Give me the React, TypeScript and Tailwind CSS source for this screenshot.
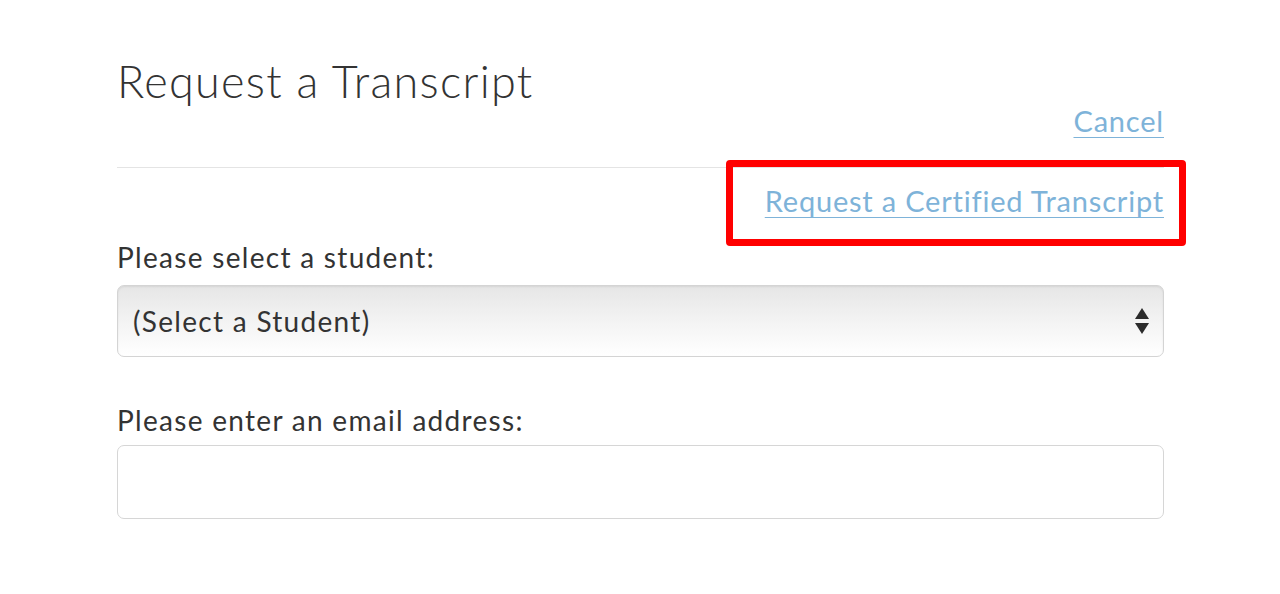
import React from "react";

const font = { fontFamily: '"Lato", "Open Sans", sans-serif' };

export default function App() {
  return (
    <div className="min-h-[594px] w-full bg-white" style={font}>
      <div className="w-[1047px] ml-[117px] pt-[55px]">
        <div className="flex items-start justify-between">
          <h1 className="text-[45px] font-light leading-[52px] tracking-[1.3px] text-[#333]">
            Request a Transcript
          </h1>
        </div>
        <div className="flex justify-end -mt-[4px]">
          <a
            href="#"
            className="text-[29px] leading-[36px] tracking-[0.8px] text-[#7eb3d9] underline underline-offset-[5px] decoration-1"
          >
            Cancel
          </a>
        </div>
        <hr className="mt-[28px] border-t border-[#e4e4e4]" />
        <div className="flex justify-end mt-[13px]">
          <div className="relative">
            <a
              href="#"
              className="text-[29px] leading-[40px] tracking-[0.8px] text-[#7eb3d9] underline underline-offset-[5px] decoration-1"
            >
              Request a Certified Transcript
            </a>
            {/* annotation box */}
            <div className="pointer-events-none absolute -left-[39px] -right-[22px] -top-[21px] -bottom-[25px] rounded-[4px] border-[7px] border-[#ff0000]" />
          </div>
        </div>
        <label className="mt-[18px] block text-[28px] leading-[36px] tracking-[1.3px] text-[#333]">
          Please select a student:
        </label>
        <div className="relative mt-[10px]">
          <select
            className="h-[72px] w-full appearance-none rounded-[7px] border border-[#d4d4d4] bg-gradient-to-b from-[#e6e6e6] via-[#f3f3f3] to-[#ffffff] pl-[15px] text-[28px] tracking-[1.3px] text-[#333] shadow-[inset_0_1px_2px_rgba(0,0,0,0.08)]"
            style={font}
          >
            <option>(Select a Student)</option>
          </select>
          <svg
            className="pointer-events-none absolute right-[15px] top-[23px]"
            width="14"
            height="26"
            viewBox="0 0 14 26"
          >
            <path d="M7 0 L14 11 L0 11 Z" fill="#2b2b2b" />
            <path d="M0 15 L14 15 L7 26 Z" fill="#2b2b2b" />
          </svg>
        </div>
        <label className="mt-[45px] block text-[28px] leading-[36px] tracking-[1.3px] text-[#333]">
          Please enter an email address:
        </label>
        <input
          type="email"
          className="mt-[7px] block h-[74px] w-full rounded-[7px] border border-[#d6d6d6] bg-white px-[15px] text-[27px]"
        />
      </div>
    </div>
  );
}
